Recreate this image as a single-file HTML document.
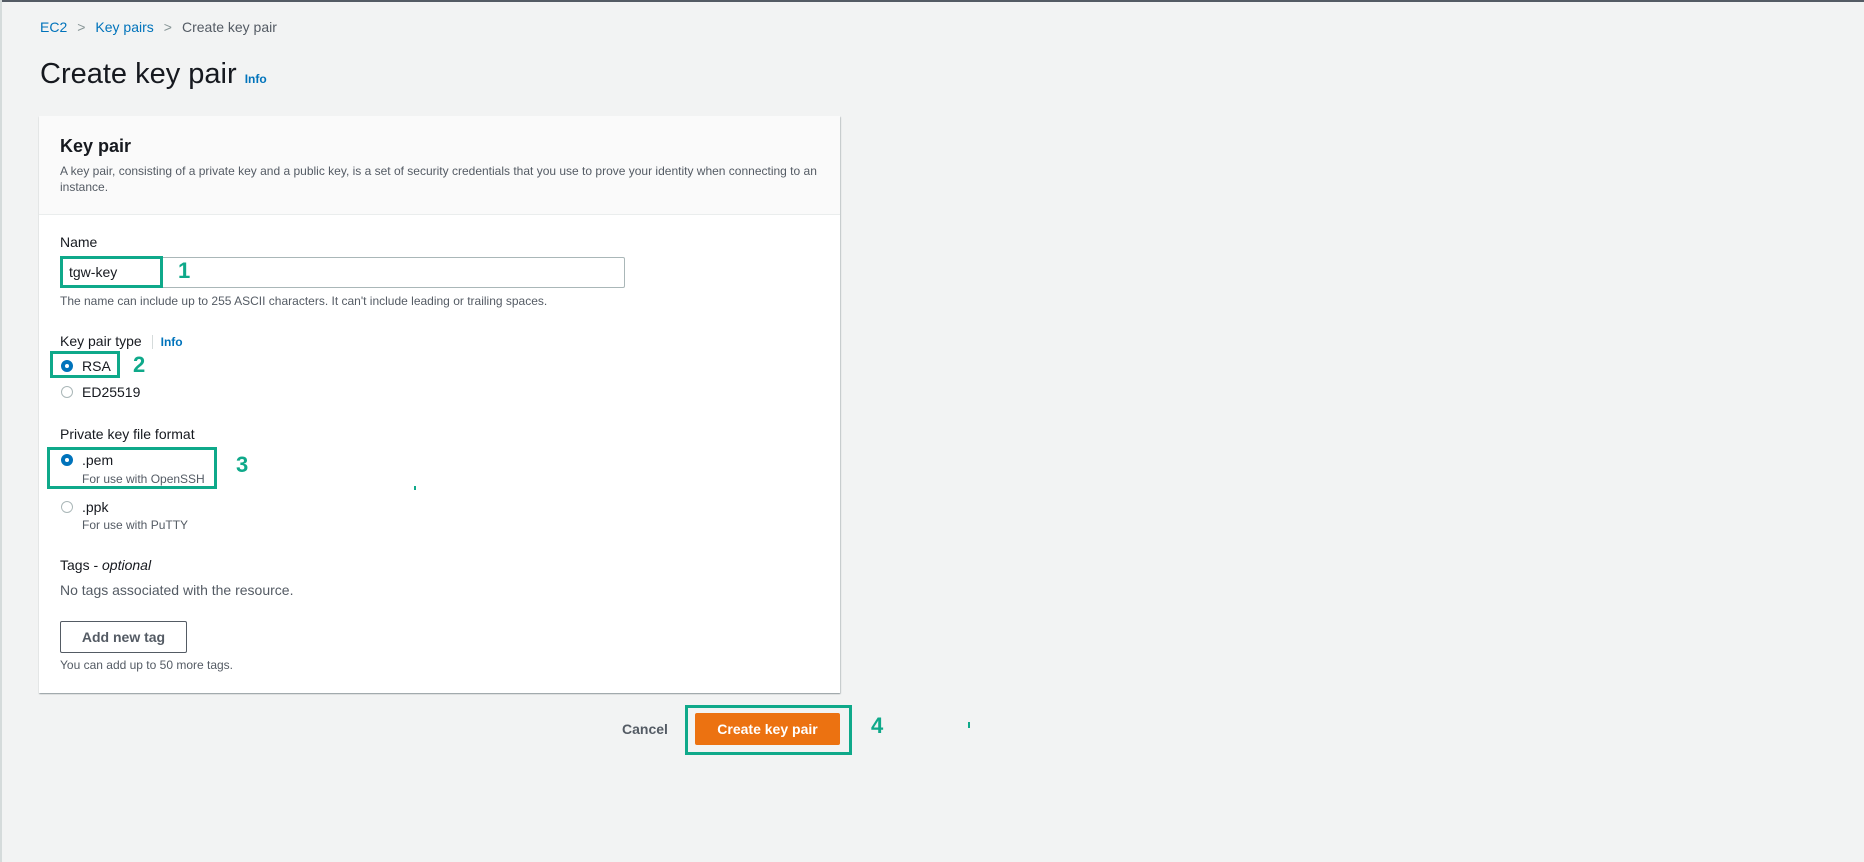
<!DOCTYPE html>
<html><head><style>
body{margin:0;width:1864px;height:862px;background:#f2f3f3;font-family:"Liberation Sans",sans-serif;position:relative;overflow:hidden;color:#16191f}
.a{position:absolute;white-space:nowrap}
.g{position:absolute;border:3px solid #0fa98a;box-sizing:border-box}
.n{position:absolute;color:#0fa98a;font-weight:bold;font-size:22px}
.r{position:absolute;width:12px;height:12px;border-radius:50%;box-sizing:border-box}
.on{border:4px solid #0073bb;background:#fff}
.off{border:1px solid #aab7b8;background:#fff}
.s{font-size:12px;color:#545b64}
</style></head><body>
<div class="a" style="left:0;top:0;width:1864px;height:2px;background:#545b64"></div>
<div class="a" style="left:0;top:0;width:2px;height:862px;background:#d5dbdb"></div>
<div class="a" style="left:40px;top:19px;font-size:14px"><span style="color:#0073bb">EC2</span><span style="color:#879596;margin:0 10px">&gt;</span><span style="color:#0073bb">Key pairs</span><span style="color:#879596;margin:0 10px">&gt;</span><span style="color:#545b64">Create key pair</span></div>
<div class="a" style="left:40px;top:58px;font-size:29px">Create key pair <span style="font-size:12px;color:#0073bb;font-weight:bold">Info</span></div>
<div class="a" style="left:39px;top:116px;width:801px;height:577px;background:#fff;box-shadow:0 1px 1px rgba(0,28,36,.3),1px 1px 1px rgba(0,28,36,.15)"></div>
<div class="a" style="left:39px;top:116px;width:801px;height:98px;background:#fafafa;border-bottom:1px solid #eaeded"></div>
<div class="a" style="left:60px;top:136px;font-size:18px;font-weight:bold">Key pair</div>
<div class="a" style="left:60px;top:163px;font-size:12px;color:#545b64;line-height:16px;white-space:normal;width:770px">A key pair, consisting of a private key and a public key, is a set of security credentials that you use to prove your identity when connecting to an instance.</div>
<div class="a" style="left:60px;top:234px;font-size:14px">Name</div>
<div class="a" style="left:60px;top:257px;width:565px;height:31px;border:1px solid #aab7b8;border-radius:2px;box-sizing:border-box"></div>
<div class="a" style="left:69px;top:264px;font-size:14px">tgw-key</div>
<div class="g" style="left:60px;top:256px;width:103px;height:32px"></div>
<div class="n" style="left:178px;top:258px">1</div>
<div class="a s" style="left:60px;top:294px">The name can include up to 255 ASCII characters. It can't include leading or trailing spaces.</div>
<div class="a" style="left:60px;top:333px;font-size:14px">Key pair type <span style="border-left:1px solid #d5dbdb;margin-left:6px;padding-left:8px;color:#0073bb;font-size:12px;font-weight:bold">Info</span></div>
<div class="r on" style="left:61px;top:360px"></div>
<div class="a" style="left:82px;top:358px;font-size:14px">RSA</div>
<div class="g" style="left:50px;top:351px;width:70px;height:27px"></div>
<div class="n" style="left:133px;top:352px">2</div>
<div class="r off" style="left:61px;top:386px"></div>
<div class="a" style="left:82px;top:384px;font-size:14px">ED25519</div>
<div class="a" style="left:60px;top:426px;font-size:14px">Private key file format</div>
<div class="r on" style="left:61px;top:454px"></div>
<div class="a" style="left:82px;top:452px;font-size:14px">.pem</div>
<div class="a s" style="left:82px;top:472px">For use with OpenSSH</div>
<div class="g" style="left:47px;top:447px;width:170px;height:42px"></div>
<div class="n" style="left:236px;top:452px">3</div>
<div class="a" style="left:414px;top:486px;width:2px;height:4px;background:#0fa98a"></div>
<div class="r off" style="left:61px;top:501px"></div>
<div class="a" style="left:82px;top:499px;font-size:14px">.ppk</div>
<div class="a s" style="left:82px;top:518px">For use with PuTTY</div>
<div class="a" style="left:60px;top:557px;font-size:14px">Tags - <i>optional</i></div>
<div class="a" style="left:60px;top:582px;font-size:14px;color:#545b64">No tags associated with the resource.</div>
<div class="a" style="left:60px;top:621px;width:127px;height:32px;border:1px solid #545b64;border-radius:2px;box-sizing:border-box;font-size:14px;font-weight:bold;color:#545b64;text-align:center;line-height:30px">Add new tag</div>
<div class="a s" style="left:60px;top:658px">You can add up to 50 more tags.</div>
<div class="a" style="left:622px;top:721px;font-size:14px;font-weight:bold;color:#545b64">Cancel</div>
<div class="a" style="left:695px;top:713px;width:145px;height:32px;background:#ec7211;border-radius:2px;color:#fff;font-size:14px;font-weight:bold;text-align:center;line-height:32px">Create key pair</div>
<div class="g" style="left:685px;top:705px;width:167px;height:50px"></div>
<div class="n" style="left:871px;top:713px">4</div>
<div class="a" style="left:968px;top:722px;width:2px;height:6px;background:#0fa98a"></div>
</body></html>
